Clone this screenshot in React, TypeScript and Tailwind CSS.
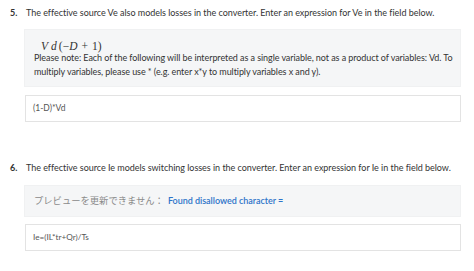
import React from 'react'

const SANS = { fontFamily: 'Lato, "Noto Sans CJK JP", sans-serif' }

function MathPreview() {
  return (
    <span className="text-[11.5px] text-[#333] whitespace-nowrap" style={{ fontFamily: '"Liberation Serif", serif' }}>
      <i>V</i>
      <i className="ml-[3px]">d</i>
      <span className="ml-[2px]">(</span>
      <span>−</span>
      <i>D</i>
      <span className="mx-[4px]">+</span>
      <span>1</span>
      <span>)</span>
    </span>
  )
}

function Question({ num, children }: { num: string; children: React.ReactNode }) {
  return (
    <div className="flex h-[16px] items-center text-[9px] tracking-[-0.03px] text-[#333] whitespace-nowrap">
      <span className="w-[16px] font-bold">{num}</span>
      <span>{children}</span>
    </div>
  )
}

export default function App() {
  return (
    <div className="w-[474px] h-[271px] bg-white pt-[5px] pl-[10px]" style={SANS}>
      {/* Question 5 */}
      <Question num="5.">
        The effective source Ve also models losses in the converter. Enter an expression for Ve in the field below.
      </Question>
      <div className="ml-[14px] mt-[8px] w-[437px] h-[58px] bg-[#f5f6f7] border border-[#f0f1f2] pl-[9px] pt-[7px] pr-[4px]">
        <div className="h-[14px] leading-[14px] pl-[7px]">
          <MathPreview />
        </div>
        <p className="text-[9px] tracking-[-0.07px] leading-[14px] text-[#333]">
          Please note: Each of the following will be interpreted as a single variable, not as a product of variables: Vd. To
          multiply variables, please use * (e.g. enter x*y to multiply variables x and y).
        </p>
      </div>
      <div className="ml-[15px] mt-[8px] w-[436px] h-[27px] border border-[#e3e3e3] flex items-center pl-[7px] text-[8.5px] text-[#555]">
        (1-D)*Vd
      </div>

      {/* Question 6 */}
      <div className="mt-[38px]">
        <Question num="6.">
          The effective source Ie models switching losses in the converter. Enter an expression for Ie in the field below.
        </Question>
      </div>
      <div className="ml-[14px] mt-[9px] w-[437px] h-[32px] bg-[#f5f6f7] border border-[#f0f1f2] flex items-center pl-[9px] whitespace-nowrap">
        <span className="text-[9.3px] text-[#8a8a8a]">プレビューを更新できません：</span>
        <span className="ml-[4px] text-[9px] tracking-[-0.03px] text-[#2d74c9] font-semibold">Found disallowed character =</span>
      </div>
      <div className="ml-[15px] mt-[7px] w-[436px] h-[27px] border border-[#e3e3e3] flex items-center pl-[7px] text-[8.2px] text-[#555]">
        Ie=(IL*tr+Qr)/Ts
      </div>
    </div>
  )
}
